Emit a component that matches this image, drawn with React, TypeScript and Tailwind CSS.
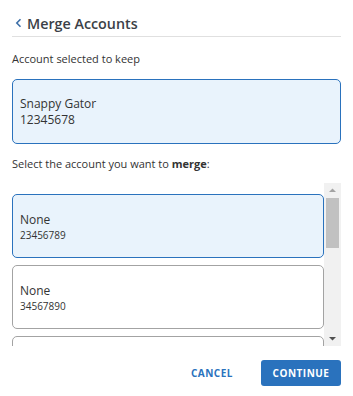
import React from "react";

const accounts = [
  { name: "None", id: "23456789", selected: true },
  { name: "None", id: "34567890", selected: false },
  { name: "None", id: "45678901", selected: false },
];

export default function App() {
  return (
    <div className="w-[353px] h-[396px] bg-white px-3 text-[#333] flex flex-col" style={{ fontFamily: '"Open Sans", sans-serif' }}>
      <div className="h-[37px] flex items-end pb-[2px] border-b border-[#e0e0e0] gap-[3px]">
        <svg width="10" height="10" viewBox="0 0 10 10" className="ml-[2px] mb-[6px]">
          <path d="M6.5 1.2 L2.8 5 L6.5 8.8" fill="none" stroke="#3d6fa8" strokeWidth="1.6" />
        </svg>
        <span className="text-[14.3px] font-semibold text-[#3b3f47] leading-[20px]">Merge Accounts</span>
      </div>

      <div className="mt-[14px] text-[11px] leading-[16px]">Account selected to keep</div>

      <div className="mt-[12px] h-[65px] rounded-[5px] border border-[#2a72bd] bg-[#e9f3fc] flex flex-col justify-center px-[7px] text-[12px] leading-[16px]">
        <div>Snappy Gator</div>
        <div>12345678</div>
      </div>

      <div className="mt-[12px] text-[11px] leading-[16px]">
        Select the account you want to <span className="font-bold">merge</span>:
      </div>

      <div className="mt-[11px] h-[163px] flex">
        <div className="flex-1 overflow-hidden pt-[11px] flex flex-col gap-[7px]">
          {accounts.map((a) => (
            <div
              key={a.id}
              className={`shrink-0 h-[64px] rounded-[5px] border flex flex-col justify-center px-[7px] pt-[2px] ${a.selected ? "border-[#2a72bd] bg-[#e9f3fc]" : "border-[#a3a3a3] bg-white"}`}
            >
              <div className="text-[12px] leading-[17px]">{a.name}</div>
              <div className="text-[10px] leading-[15px]">{a.id}</div>
            </div>
          ))}
        </div>
        <div className="w-[17px] bg-[#f1f1f1] flex flex-col items-center">
          <svg width="17" height="15" viewBox="0 0 17 15">
            <path d="M5 9 L8.5 5.5 L12 9 Z" fill="#a3a3a3" />
          </svg>
          <div className="w-[13px] h-[50px] bg-[#c1c1c1]" />
          <div className="flex-1" />
          <svg width="17" height="15" viewBox="0 0 17 15">
            <path d="M5 6 L8.5 9.5 L12 6 Z" fill="#505050" />
          </svg>
        </div>
      </div>

      <div className="mt-[14px] flex justify-end items-center gap-[28px]">
        <button className="text-[10px] font-bold tracking-[0.5px] text-[#2a72bd]">CANCEL</button>
        <button className="w-[80px] h-[26px] rounded-[3px] bg-[#2a72bd] text-white text-[10px] font-bold tracking-[0.5px]">CONTINUE</button>
      </div>
    </div>
  );
}
